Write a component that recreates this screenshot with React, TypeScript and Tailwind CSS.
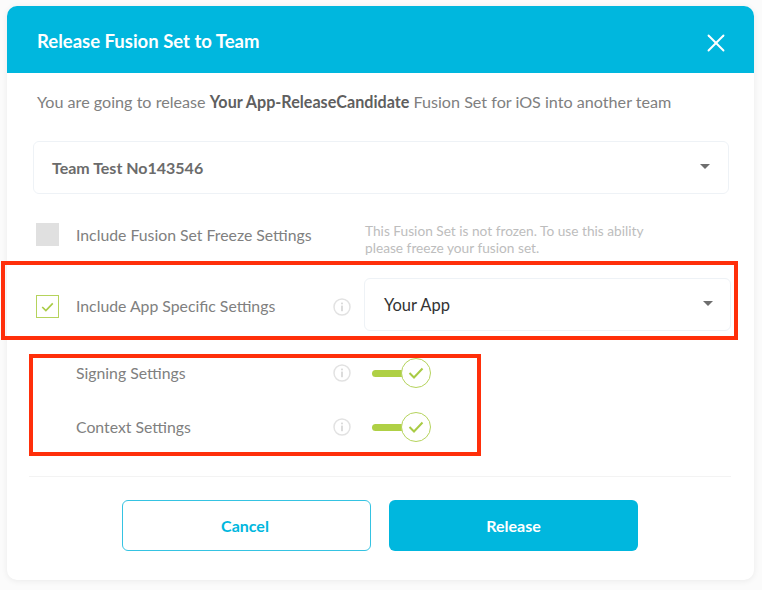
import { X } from 'lucide-react';

function Check({ className }: { className: string }) {
  return (
    <svg className={className} viewBox="0 0 16 12" fill="none" stroke="#a9cb45" strokeWidth={2}>
      <path d="M1.5 6l4.5 4.5 8.5-9" />
    </svg>
  );
}

function InfoIcon() {
  return (
    <svg className="w-[18px] h-[18px] shrink-0" viewBox="0 0 18 18" fill="none">
      <circle cx="9" cy="9" r="8" stroke="#e2e2e2" strokeWidth={1.5} />
      <rect x="8.2" y="7.6" width="1.6" height="5.6" fill="#d4d4d4" />
      <rect x="8.2" y="4.6" width="1.6" height="1.7" fill="#d4d4d4" />
    </svg>
  );
}

function Caret() {
  return <div className="-mt-[2px] w-0 h-0 border-x-[5px] border-x-transparent border-t-[5px] border-t-[#6e6e6e]" />;
}

function Toggle() {
  return (
    <div className="flex items-center ml-[21px]">
      <div className="w-[34px] h-[7px] rounded-l-full bg-[#afd045]" />
      <div className="w-[30px] h-[30px] -ml-[5px] rounded-full border border-[#b5d35c] bg-white flex items-center justify-center">
        <Check className="w-[16px] h-[12px]" />
      </div>
    </div>
  );
}

function SettingRow({ label, mt }: { label: string; mt: string }) {
  return (
    <div className={`flex items-center h-[30px] pl-[69px] ${mt}`}>
      <span className="w-[257px] text-[15.8px] text-[#808080]">{label}</span>
      <InfoIcon />
      <Toggle />
    </div>
  );
}

export default function App() {
  return (
    <div className="relative w-[762px] h-[590px] bg-[#fbfbfb] pt-[6px] pl-[7px] overflow-hidden font-['Lato',sans-serif]">
      <div className="w-[747px] h-[574px] bg-white rounded-[10px] shadow-[0_1px_6px_rgba(0,0,0,0.07)] overflow-hidden">
        <div className="h-[67px] bg-[#00b7de] flex items-center justify-between pl-[30px] pr-[23px]">
          <h1 className="mt-[4px] text-[18.5px] font-bold text-white">Release Fusion Set to Team</h1>
          <X className="w-[30px] h-[30px] text-white mt-[7px]" strokeWidth={1.5} absoluteStrokeWidth />
        </div>

        <p className="mt-[17px] pl-[30px] text-[16.15px] leading-[24px] text-[#808080] whitespace-nowrap">
          You are going to release <b className="text-[#5f5f5f]">Your App-ReleaseCandidate</b> Fusion Set for iOS into another team
        </p>

        <div className="mt-[27px] ml-[26px] w-[696px] h-[53px] border border-[#eef2f6] rounded-[6px] flex items-center justify-between pl-[18px] pr-[18px]">
          <span className="text-[16px] font-bold text-[#6b6b6b]">Team Test No143546</span>
          <Caret />
        </div>

        <div className="mt-[27px] flex items-start pl-[29px] h-[38px]">
          <div className="mt-[2px] w-[23px] h-[23px] bg-[#e0e0e0]" />
          <span className="ml-[17px] w-[289px] mt-[2px] text-[15.8px] leading-[23px] text-[#808080] whitespace-nowrap">Include Fusion Set Freeze Settings</span>
          <p className="mt-[1px] text-[13.7px] leading-[17px] text-[#bdbdbd] whitespace-nowrap">
            This Fusion Set is not frozen. To use this ability
            <br />
            please freeze your fusion set.
          </p>
        </div>

        <div className="mt-[19px] flex items-center pl-[29px] h-[53px]">
          <div className="mt-[4px] w-[23px] h-[23px] border border-[#b5d35c] flex items-center justify-center">
            <Check className="w-[13px] h-[10px]" />
          </div>
          <span className="mt-[2px] ml-[17px] w-[257px] text-[15.8px] text-[#808080]">Include App Specific Settings</span>
          <div className="mt-[4px]">
            <InfoIcon />
          </div>
          <div className="ml-[13px] w-[367px] h-[53px] border border-[#eef2f6] rounded-[6px] flex items-center justify-between pl-[19px] pr-[17px]">
            <span className="mt-[2px] text-[16.5px] text-[#333333]">Your App</span>
            <Caret />
          </div>
        </div>

        <SettingRow label="Signing Settings" mt="mt-[27px]" />
        <SettingRow label="Context Settings" mt="mt-[24px]" />

        <div className="mt-[34px] ml-[22px] w-[702px] h-[1px] bg-[#f3f3f3]" />

        <div className="mt-[23px] ml-[115px] flex gap-[18px]">
          <button className="w-[249px] h-[51px] pr-[3px] rounded-[6px] border border-[#35c3e2] bg-white text-[16px] font-bold text-[#00b7de]">Cancel</button>
          <button className="w-[249px] h-[51px] rounded-[6px] bg-[#00b7de] text-[16px] font-bold text-white">Release</button>
        </div>
      </div>

      {/* annotation boxes drawn over the screenshot */}
      <div className="absolute left-[1px] top-[261px] w-[737px] h-[79px] border-[4px] border-[#ff2f0a]" />
      <div className="absolute left-[29px] top-[354px] w-[452px] h-[102px] border-[4px] border-[#ff2f0a]" />
    </div>
  );
}
